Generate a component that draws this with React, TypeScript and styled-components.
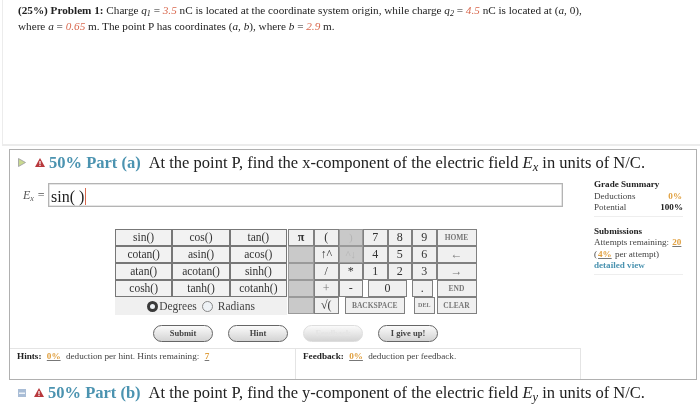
import React from "react";
import styled, { createGlobalStyle } from "styled-components";

const Global = createGlobalStyle`
  html, body { margin: 0; padding: 0; background: #fff; }
  body { font-family: "Liberation Serif", "Times New Roman", serif; color: #222; }
`;

const Page = styled.div`
  width: 700px;
  height: 406px;
  overflow: hidden;
  display: flex;
  flex-direction: column;
  filter: blur(0.4px);
`;

const Problem = styled.section`
  height: 146px;
  box-sizing: border-box;
  margin-left: 2px;
  padding: 2px 0 0 15px;
  border-left: 1px solid #ececec;
  border-bottom: 2px solid #ececec;
  font-size: 11.2px;
  line-height: 16px;
`;

const Value = styled.i`
  color: #d9694f;
`;

const Sub = styled.sub`
  font-size: 8px;
  line-height: 0;
  vertical-align: -2px;
`;

const HeadSub = styled.sub`
  font-size: 12.5px;
  line-height: 0;
  vertical-align: -3px;
`;

const PartPanel = styled.section`
  height: 231px;
  box-sizing: border-box;
  margin: 3px 3px 0 9px;
  border: 1px solid #b0b0b0;
  display: flex;
  flex-direction: column;
`;

const Heading = styled.h2<{ $inset?: number }>`
  margin: 0;
  display: flex;
  align-items: center;
  height: 25px;
  padding-left: ${(p) => p.$inset ?? 8}px;
  font-weight: normal;
  font-size: 16.5px;
  line-height: 25px;
  white-space: pre;
  color: #222;
`;

const PartLabel = styled.b`
  color: #4b93b0;
  margin-right: 8px;
`;

const GlyphSlot = styled.svg<{ $gap: number }>`
  flex: none;
  margin-right: ${(p) => p.$gap}px;
`;

const Columns = styled.div`
  flex: 1;
  display: flex;
  min-height: 0;
`;

const Main = styled.div`
  width: 571px;
  flex: none;
  display: flex;
  flex-direction: column;
`;

const AnswerRow = styled.div`
  display: flex;
  align-items: center;
  padding: 8px 0 0 13px;
`;

const AnswerLabel = styled.span`
  width: 25px;
  font-size: 12px;
  font-style: italic;
  color: #555;
`;

const AnswerInput = styled.div`
  width: 515px;
  height: 24px;
  box-sizing: border-box;
  border: 1px solid #b4b4b4;
  box-shadow: inset 0 0 0 0.5px #ccc;
  padding-left: 2px;
  font-size: 16px;
  line-height: 25px;
`;

const Caret = styled.span`
  border-right: 1px solid #d9694f;
  padding-right: 1px;
`;

const Calculator = styled.div`
  display: flex;
  margin: 22px 0 0 105px;
`;

const FunctionPanel = styled.div`
  width: 172px;
  background: #f0f0f0;
`;

const FunctionGrid = styled.div`
  display: grid;
  grid-template-columns: repeat(3, 1fr);
  grid-auto-rows: 17px;
`;

const FunctionKey = styled.div`
  border: 1px solid #777;
  background: #f2f2f2;
  font-size: 11.5px;
  line-height: 15px;
  text-align: center;
  color: #333;
`;

const AngleRow = styled.div`
  height: 18px;
  display: flex;
  align-items: center;
  justify-content: center;
  font-size: 11.5px;
  color: #444;
`;

const Radio = styled.span<{ $on?: boolean }>`
  width: 11px;
  height: 11px;
  border-radius: 50%;
  box-sizing: border-box;
  background: #eef2f6;
  border: ${(p) => (p.$on ? "3.5px solid #3a3a3a" : "1px solid #888")};
  margin: 0 ${(p) => (p.$on ? 1 : 5)}px 0 ${(p) => (p.$on ? 0 : 5)}px;
`;

const Keypad = styled.div`
  display: grid;
  grid-template-columns: 26px repeat(5, 24.5px) 40px;
  grid-auto-rows: 17px;
  margin-left: 1px;
`;

const Key = styled.div<{ $span?: number; $start?: number; $ml?: number; $mr?: number; $size?: number; $muted?: boolean }>`
  ${(p) => (p.$start ? `grid-column: ${p.$start} / span ${p.$span ?? 1};` : "")}
  margin: 0 ${(p) => p.$mr ?? 0}px 0 ${(p) => p.$ml ?? 0}px;
  box-sizing: border-box;
  border: 1px solid #808080;
  background: #f0f0f0;
  font-size: ${(p) => p.$size ?? 12}px;
  font-weight: ${(p) => (p.$size ? "bold" : "normal")};
  line-height: 15px;
  text-align: center;
  color: ${(p) => (p.$muted ? "#777" : "#333")};
  white-space: nowrap;
`;

const BlankKey = styled.div`
  border: 1px solid #9a9a9a;
  background: #c9c9c9;
  color: #b5b5b5;
  font-size: 11px;
  line-height: 15px;
  text-align: center;
`;

const ButtonRow = styled.div`
  display: flex;
  gap: 15px;
  margin: 10px 0 0 143px;
`;

const Pill = styled.div<{ $off?: boolean }>`
  width: 60px;
  height: 17px;
  box-sizing: border-box;
  border-radius: 9px;
  border: 1px solid ${(p) => (p.$off ? "#ddd" : "#666")};
  background: linear-gradient(#fafafa, #d4d4d4);
  font-size: 8.5px;
  font-weight: bold;
  line-height: 15px;
  text-align: center;
  color: ${(p) => (p.$off ? "#e4e4e4" : "#444")};
`;

const InfoBar = styled.div`
  flex: 1;
  margin-top: 6px;
  display: flex;
  border-top: 1px solid #e4e4e4;
  border-right: 1px solid #e4e4e4;
`;

const InfoCell = styled.div<{ $width: number }>`
  width: ${(p) => p.$width}px;
  box-sizing: border-box;
  padding: 1px 0 0 7px;
  font-size: 9.2px;
  line-height: 12px;
  color: #444;
  & + & { border-left: 1px solid #e4e4e4; }
`;

const Stat = styled.u`
  color: #e0a040;
  font-weight: bold;
  text-decoration-color: #777;
  padding: 0 1px;
`;

const InfoStat = styled(Stat)`
  padding: 0 3px;
`;

const Strong = styled.b`
  color: #222;
`;

const Sidebar = styled.aside`
  width: 89px;
  flex: none;
  margin: 4px 0 0 13px;
  font-size: 9.1px;
  line-height: 11.5px;
  color: #444;
  white-space: nowrap;
`;

const SideTitle = styled.div`
  font-weight: bold;
  color: #222;
`;

const SideRow = styled.div`
  display: flex;
  justify-content: space-between;
`;

const SideGroup = styled.div`
  border-bottom: 1px solid #eee;
  padding-bottom: 2px;
  & + & { margin-top: 9px; }
`;

const Link = styled.div`
  color: #4b93b0;
  font-weight: bold;
`;

const Arrow = () => (
  <GlyphSlot $gap={9} width="8" height="9" viewBox="0 0 8 9">
    <path d="M0.5 0.5 L7.5 4.5 L0.5 8.5 Z" fill="#c9d98f" stroke="#9a9aa0" strokeWidth="0.8" />
  </GlyphSlot>
);

const Warning = () => (
  <GlyphSlot $gap={4} width="10" height="9" viewBox="0 0 10 9">
    <path d="M5 0 L10 9 L0 9 Z" fill="#b8383c" />
    <rect x="4.4" y="3" width="1.2" height="3.2" fill="#fff" />
    <rect x="4.4" y="6.8" width="1.2" height="1.2" fill="#fff" />
  </GlyphSlot>
);

const Collapse = () => (
  <GlyphSlot $gap={8} width="8" height="8" viewBox="0 0 8 8">
    <rect width="8" height="8" fill="#a9bdd6" />
    <rect x="1" y="3.5" width="6" height="1.5" fill="#eef3f8" />
  </GlyphSlot>
);

const functions = ["sin()", "cos()", "tan()", "cotan()", "asin()", "acos()", "atan()", "acotan()", "sinh()", "cosh()", "tanh()", "cotanh()"];

export default function App() {
  return (
    <Page>
      <Global />
      <Problem>
        <b>(25%) Problem 1:</b> Charge <i>q<Sub>1</Sub></i> = <Value>3.5</Value> nC is located at the coordinate system origin, while charge <i>q<Sub>2</Sub></i> = <Value>4.5</Value> nC is located at (<i>a</i>, 0),
        <br />
        where <i>a</i> = <Value>0.65</Value> m. The point P has coordinates (<i>a</i>, <i>b</i>), where <i>b</i> = <Value>2.9</Value> m.
      </Problem>
      <PartPanel>
        <Heading>
          <Arrow />
          <Warning />
          <PartLabel>50% Part (a)</PartLabel>
          <span>At the point P, find the x-component of the electric field <i>E<HeadSub>x</HeadSub></i> in units of N/C.</span>
        </Heading>
        <Columns>
          <Main>
            <AnswerRow>
              <AnswerLabel>E<Sub>x</Sub> =</AnswerLabel>
              <AnswerInput><Caret>sin( )</Caret></AnswerInput>
            </AnswerRow>
            <Calculator>
              <FunctionPanel>
                <FunctionGrid>
                  {functions.map((f) => <FunctionKey key={f}>{f}</FunctionKey>)}
                </FunctionGrid>
                <AngleRow>
                  <Radio $on /><span>Degrees</span><Radio /><span>Radians</span>
                </AngleRow>
              </FunctionPanel>
              <Keypad>
                <Key><b>π</b></Key><Key>(</Key><BlankKey>)</BlankKey><Key>7</Key><Key>8</Key><Key>9</Key><Key $size={7.5} $muted>HOME</Key>
                <BlankKey /><Key>↑^</Key><BlankKey>^↓</BlankKey><Key>4</Key><Key>5</Key><Key>6</Key><Key $muted>←</Key>
                <BlankKey /><Key>/</Key><Key>*</Key><Key>1</Key><Key>2</Key><Key>3</Key><Key $muted>→</Key>
                <BlankKey /><Key $muted>+</Key><Key>-</Key><Key $start={4} $span={2} $ml={5} $mr={5}>0</Key><Key $mr={4}>.</Key><Key $size={7.5} $muted>END</Key>
                <BlankKey /><Key>√(</Key><Key $start={3} $span={3} $ml={6} $mr={7} $size={7.5} $muted>BACKSPACE</Key><Key $ml={2} $mr={2} $size={6} $muted>DEL</Key><Key $size={7.5} $muted>CLEAR</Key>
              </Keypad>
            </Calculator>
            <ButtonRow>
              <Pill>Submit</Pill>
              <Pill>Hint</Pill>
              <Pill $off>Feedback</Pill>
              <Pill>I give up!</Pill>
            </ButtonRow>
            <InfoBar>
              <InfoCell $width={285}><Strong>Hints:</Strong> <InfoStat>0%</InfoStat> deduction per hint. Hints remaining: <InfoStat>7</InfoStat></InfoCell>
              <InfoCell $width={285}><Strong>Feedback:</Strong> <InfoStat>0%</InfoStat> deduction per feedback.</InfoCell>
            </InfoBar>
          </Main>
          <Sidebar>
            <SideGroup>
              <SideTitle>Grade Summary</SideTitle>
              <SideRow><span>Deductions</span><Stat as="span">0%</Stat></SideRow>
              <SideRow><span>Potential</span><Strong>100%</Strong></SideRow>
            </SideGroup>
            <SideGroup>
              <SideTitle>Submissions</SideTitle>
              <div>Attempts remaining: <Stat>20</Stat></div>
              <div>(<Stat>4%</Stat> per attempt)</div>
              <Link>detailed view</Link>
            </SideGroup>
          </Sidebar>
        </Columns>
      </PartPanel>
      <Heading $inset={18}>
        <Collapse />
        <Warning />
        <PartLabel>50% Part (b)</PartLabel>
        <span>At the point P, find the y-component of the electric field <i>E<HeadSub>y</HeadSub></i> in units of N/C.</span>
      </Heading>
    </Page>
  );
}
